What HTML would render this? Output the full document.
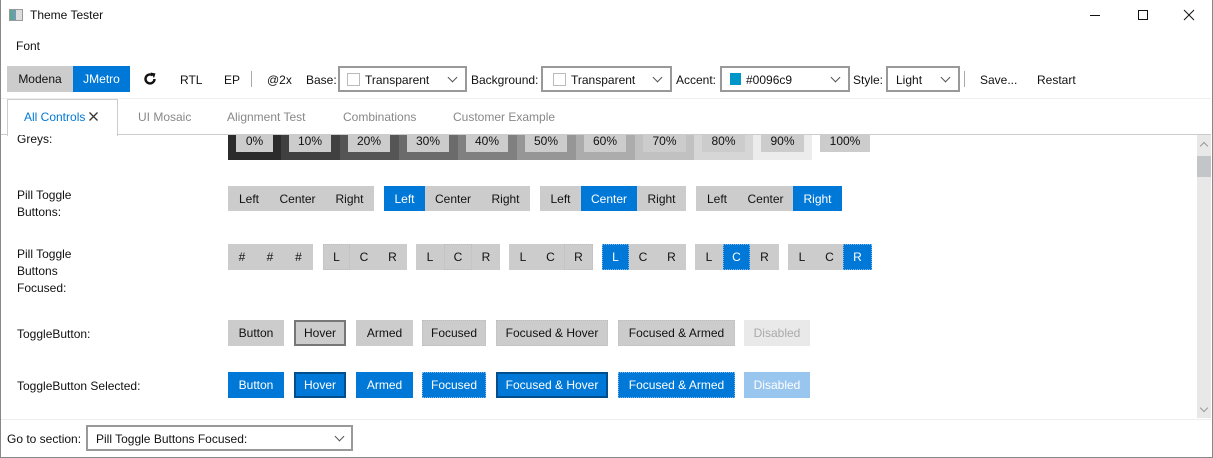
<!DOCTYPE html>
<html><head><meta charset="utf-8"><style>
*{box-sizing:border-box;margin:0;padding:0}
body{width:1213px;height:458px;overflow:hidden;background:#fff;font-family:"Liberation Sans",sans-serif;font-size:12px;color:#111;position:relative}
.a{position:absolute;white-space:nowrap}
.b{position:absolute;display:flex;align-items:center;justify-content:center;white-space:nowrap}
.g{background:#ccc}
.bl{background:#0078d7;color:#fff}
.combo{position:absolute;border:2px solid #999;background:#fff;height:26px}
.chev{position:absolute;width:7px;height:7px;border-right:1px solid #555;border-bottom:1px solid #555;transform:rotate(45deg)}
.fd{outline:1px dotted #bdbdbd;outline-offset:-1px}
.fdb{outline:1px dotted #7fb6e8;outline-offset:-1px}
</style></head><body>
<div class="a" style="left:0;top:0;width:1213px;height:458px;border:1px solid #888;border-top:none"></div>
<div class="a" style="left:9px;top:9px;width:14px;height:12px;border:1px solid #999;background:linear-gradient(90deg,#5a8 0,#79b 50%,#ddd 50%)"></div>
<div class="a" style="left:30px;top:8px;font-size:12px">Theme Tester</div>
<div class="a" style="left:1090px;top:15px;width:10px;height:1px;background:#111"></div>
<div class="a" style="left:1138px;top:10px;width:10px;height:10px;border:1px solid #111"></div>
<svg class="a" style="left:1183px;top:9px" width="12" height="12"><path d="M1 1L11 11M11 1L1 11" stroke="#111" stroke-width="1"/></svg>
<div class="a" style="left:16px;top:39px">Font</div>
<div class="b g" style="left:7px;top:66px;width:66px;height:26px">Modena</div>
<div class="b bl" style="left:73px;top:66px;width:57px;height:26px">JMetro</div>
<svg class="a" style="left:143px;top:72px" width="14" height="14"><path d="M11.5 7A4.5 4.5 0 1 1 9.5 3.2" fill="none" stroke="#111" stroke-width="2.4"/><path d="M7.5 0.5L12.5 1.5L11 6Z" fill="#111"/></svg>
<div class="a" style="left:180px;top:73px">RTL</div>
<div class="a" style="left:224px;top:73px">EP</div>
<div class="a" style="left:251px;top:71px;width:1px;height:16px;background:#aaa"></div>
<div class="a" style="left:267px;top:73px">@2x</div>
<div class="a" style="left:306px;top:73px">Base:</div>
<div class="combo" style="left:338px;top:66px;width:129px"><div class="a" style="left:7px;top:5px;width:13px;height:13px;border:1px solid #bbb"></div><div class="a" style="left:25px;top:5px">Transparent</div><div class="chev" style="left:109px;top:6px"></div></div>
<div class="a" style="left:471px;top:73px">Background:</div>
<div class="combo" style="left:541px;top:66px;width:131px"><div class="a" style="left:10px;top:5px;width:13px;height:13px;border:1px solid #bbb"></div><div class="a" style="left:28px;top:5px">Transparent</div><div class="chev" style="left:111px;top:6px"></div></div>
<div class="a" style="left:676px;top:73px">Accent:</div>
<div class="combo" style="left:720px;top:66px;width:130px"><div class="a" style="left:8px;top:5px;width:11px;height:12px;background:#0096c9"></div><div class="a" style="left:24px;top:5px">#0096c9</div><div class="chev" style="left:110px;top:6px"></div></div>
<div class="a" style="left:853px;top:73px">Style:</div>
<div class="combo" style="left:886px;top:66px;width:74px"><div class="a" style="left:8px;top:5px">Light</div><div class="chev" style="left:54px;top:6px"></div></div>
<div class="a" style="left:964px;top:71px;width:1px;height:16px;background:#aaa"></div>
<div class="a" style="left:980px;top:73px">Save...</div>
<div class="a" style="left:1037px;top:73px">Restart</div>
<div class="a" style="left:1px;top:98px;width:1210px;height:1px;background:#eee"></div>
<div class="a" style="left:1px;top:134px;width:1210px;height:1px;background:#ccc"></div>
<div class="a" style="left:7px;top:99px;width:111px;height:37px;border:1px solid #ccc;border-bottom:none;background:#fff"></div>
<div class="a" style="left:24px;top:110px;color:#0078d7">All Controls</div>
<svg class="a" style="left:89px;top:112px" width="9" height="9"><path d="M0.5 0.5L8.5 8.5M8.5 0.5L0.5 8.5" stroke="#333" stroke-width="1.3"/></svg>
<div class="a" style="left:138px;top:110px;color:#888">UI Mosaic</div>
<div class="a" style="left:227px;top:110px;color:#888">Alignment Test</div>
<div class="a" style="left:343px;top:110px;color:#888">Combinations</div>
<div class="a" style="left:453px;top:110px;color:#888">Customer Example</div>
<div class="a" style="left:1px;top:135px;width:1196px;height:283px;overflow:hidden">
 <div class="a" style="left:16px;top:-3px">Greys:</div>
 <div class="a" style="left:227px;top:0;width:53px;height:25px;background:#2b2b2b"></div>
 <div class="b g" style="left:235px;top:-6px;width:37px;height:23px">0%</div>
 <div class="a" style="left:280px;top:0;width:59px;height:25px;background:#404040"></div><div class="b g" style="left:288px;top:-6px;width:42px;height:23px">10%</div>
 <div class="a" style="left:339px;top:0;width:59px;height:25px;background:#555"></div><div class="b g" style="left:347px;top:-6px;width:42px;height:23px">20%</div>
 <div class="a" style="left:398px;top:0;width:59px;height:25px;background:#6b6b6b"></div><div class="b g" style="left:406px;top:-6px;width:42px;height:23px">30%</div>
 <div class="a" style="left:457px;top:0;width:59px;height:25px;background:#808080"></div><div class="b g" style="left:465px;top:-6px;width:42px;height:23px">40%</div>
 <div class="a" style="left:516px;top:0;width:59px;height:25px;background:#969696"></div><div class="b g" style="left:524px;top:-6px;width:42px;height:23px">50%</div>
 <div class="a" style="left:575px;top:0;width:59px;height:25px;background:#acacac"></div><div class="b g" style="left:583px;top:-6px;width:42px;height:23px">60%</div>
 <div class="a" style="left:634px;top:0;width:59px;height:25px;background:#c1c1c1"></div><div class="b g" style="left:642px;top:-6px;width:43px;height:23px">70%</div>
 <div class="a" style="left:693px;top:0;width:59px;height:25px;background:#d6d6d6"></div><div class="b g" style="left:701px;top:-6px;width:43px;height:23px">80%</div>
 <div class="a" style="left:752px;top:0;width:59px;height:25px;background:#ececec"></div><div class="b g" style="left:760px;top:-6px;width:43px;height:23px">90%</div>
 <div class="b g" style="left:819px;top:-6px;width:50px;height:23px">100%</div>

 <div class="a" style="left:16px;top:52px;line-height:17px">Pill Toggle<br>Buttons:</div>
 <div class="b g" style="left:227px;top:51px;width:42px;height:25px">Left</div><div class="b g" style="left:269px;top:51px;width:55px;height:25px">Center</div><div class="b g" style="left:324px;top:51px;width:49px;height:25px">Right</div>
 <div class="b bl" style="left:383px;top:51px;width:41px;height:25px">Left</div><div class="b g" style="left:424px;top:51px;width:56px;height:25px">Center</div><div class="b g" style="left:480px;top:51px;width:49px;height:25px">Right</div>
 <div class="b g" style="left:539px;top:51px;width:41px;height:25px">Left</div><div class="b bl" style="left:580px;top:51px;width:56px;height:25px">Center</div><div class="b g" style="left:636px;top:51px;width:49px;height:25px">Right</div>
 <div class="b g" style="left:695px;top:51px;width:42px;height:25px">Left</div><div class="b g" style="left:737px;top:51px;width:55px;height:25px">Center</div><div class="b bl" style="left:792px;top:51px;width:49px;height:25px">Right</div>

 <div class="a" style="left:16px;top:111px;line-height:17px">Pill Toggle<br>Buttons<br>Focused:</div>
 <div class="b g" style="left:227px;top:109px;width:28px;height:26px">#</div><div class="b g" style="left:255px;top:109px;width:28px;height:26px">#</div><div class="b g" style="left:283px;top:109px;width:29px;height:26px">#</div>
 <div class="b g fd" style="left:322px;top:109px;width:27px;height:26px">L</div><div class="b g" style="left:349px;top:109px;width:28px;height:26px">C</div><div class="b g" style="left:377px;top:109px;width:29px;height:26px">R</div>
 <div class="b g" style="left:415px;top:109px;width:28px;height:26px">L</div><div class="b g fd" style="left:443px;top:109px;width:28px;height:26px">C</div><div class="b g" style="left:471px;top:109px;width:28px;height:26px">R</div>
 <div class="b g" style="left:508px;top:109px;width:28px;height:26px">L</div><div class="b g" style="left:536px;top:109px;width:27px;height:26px">C</div><div class="b g fd" style="left:563px;top:109px;width:29px;height:26px">R</div>
 <div class="b bl fdb" style="left:601px;top:109px;width:27px;height:26px">L</div><div class="b g" style="left:628px;top:109px;width:28px;height:26px">C</div><div class="b g" style="left:656px;top:109px;width:29px;height:26px">R</div>
 <div class="b g" style="left:694px;top:109px;width:28px;height:26px">L</div><div class="b bl fdb" style="left:722px;top:109px;width:27px;height:26px">C</div><div class="b g" style="left:749px;top:109px;width:29px;height:26px">R</div>
 <div class="b g" style="left:787px;top:109px;width:28px;height:26px">L</div><div class="b g" style="left:815px;top:109px;width:27px;height:26px">C</div><div class="b bl fdb" style="left:842px;top:109px;width:29px;height:26px">R</div>

 <div class="a" style="left:16px;top:192px">ToggleButton:</div>
 <div class="b g" style="left:227px;top:185px;width:56px;height:26px">Button</div>
 <div class="b g" style="left:293px;top:185px;width:52px;height:26px;border:2px solid #777">Hover</div>
 <div class="b g" style="left:355px;top:185px;width:57px;height:26px">Armed</div>
 <div class="b g fd" style="left:421px;top:185px;width:64px;height:26px">Focused</div>
 <div class="b g fd" style="left:495px;top:185px;width:112px;height:26px">Focused &amp; Hover</div>
 <div class="b g fd" style="left:617px;top:185px;width:117px;height:26px">Focused &amp; Armed</div>
 <div class="b" style="left:743px;top:185px;width:66px;height:26px;background:#e9e9e9;color:#aaa">Disabled</div>

 <div class="a" style="left:16px;top:244px">ToggleButton Selected:</div>
 <div class="b bl" style="left:227px;top:237px;width:56px;height:26px">Button</div>
 <div class="b bl" style="left:293px;top:237px;width:52px;height:26px;border:2px solid #004e8c">Hover</div>
 <div class="b bl" style="left:355px;top:237px;width:57px;height:26px">Armed</div>
 <div class="b bl fdb" style="left:421px;top:237px;width:64px;height:26px">Focused</div>
 <div class="b bl" style="left:495px;top:237px;width:112px;height:26px;border:2px solid #004e8c">Focused &amp; Hover</div>
 <div class="b bl fdb" style="left:617px;top:237px;width:117px;height:26px">Focused &amp; Armed</div>
 <div class="b" style="left:743px;top:237px;width:66px;height:26px;background:#99c6ee;color:#fff">Disabled</div>
</div>
<div class="a" style="left:1197px;top:135px;width:14px;height:283px;background:#e8e8e8"></div>
<div class="a" style="left:1197px;top:156px;width:14px;height:21px;background:#c2c6c9"></div>
<div class="a" style="left:1201px;top:143px;width:6px;height:6px;border-left:1px solid #999;border-top:1px solid #999;transform:rotate(45deg)"></div>
<div class="a" style="left:1201px;top:405px;width:6px;height:6px;border-right:1px solid #999;border-bottom:1px solid #999;transform:rotate(45deg)"></div>
<div class="a" style="left:1px;top:419px;width:1210px;height:1px;background:#eee"></div>
<div class="a" style="left:7px;top:432px">Go to section:</div>
<div class="combo" style="left:86px;top:425px;width:267px"><div class="a" style="left:8px;top:5px">Pill Toggle Buttons Focused:</div><div class="chev" style="left:248px;top:6px"></div></div>
</body></html>
